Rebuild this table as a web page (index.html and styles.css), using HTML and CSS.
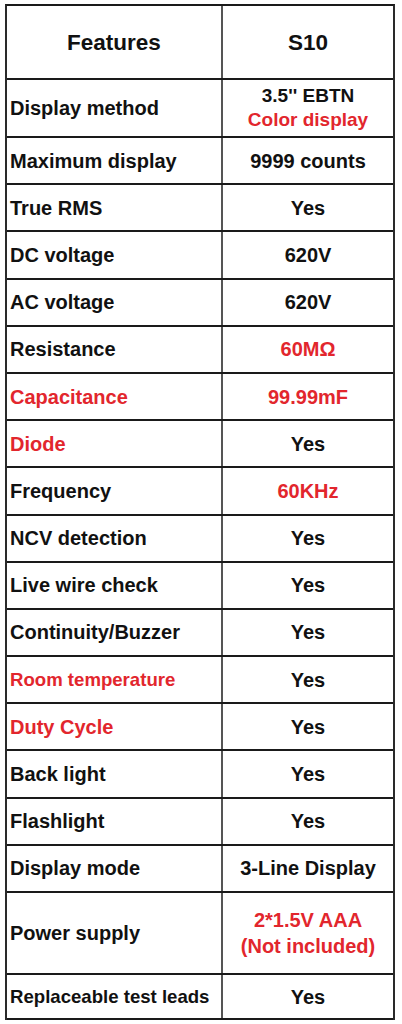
FILE: index.html
```html
<!DOCTYPE html>
<html lang="en">
<head>
<meta charset="utf-8">
<title>S10 Features</title>
<link rel="stylesheet" href="styles.css">
</head>
<body>
<div class="table">
  <div class="row head">
    <div class="cell name">Features</div>
    <div class="cell val">S10</div>
  </div>
  <div class="row first">
    <div class="cell name">Display method</div>
    <div class="cell val two"><span>3.5'' EBTN</span><span class="red">Color display</span></div>
  </div>
  <div class="row"><div class="cell name">Maximum display</div><div class="cell val">9999 counts</div></div>
  <div class="row"><div class="cell name">True RMS</div><div class="cell val">Yes</div></div>
  <div class="row"><div class="cell name">DC voltage</div><div class="cell val">620V</div></div>
  <div class="row"><div class="cell name">AC voltage</div><div class="cell val">620V</div></div>
  <div class="row"><div class="cell name">Resistance</div><div class="cell val red">60MΩ</div></div>
  <div class="row"><div class="cell name red">Capacitance</div><div class="cell val red">99.99mF</div></div>
  <div class="row"><div class="cell name red">Diode</div><div class="cell val">Yes</div></div>
  <div class="row"><div class="cell name">Frequency</div><div class="cell val red">60KHz</div></div>
  <div class="row"><div class="cell name">NCV detection</div><div class="cell val">Yes</div></div>
  <div class="row"><div class="cell name">Live wire check</div><div class="cell val">Yes</div></div>
  <div class="row"><div class="cell name">Continuity/Buzzer</div><div class="cell val">Yes</div></div>
  <div class="row"><div class="cell name red small">Room temperature</div><div class="cell val">Yes</div></div>
  <div class="row"><div class="cell name red">Duty Cycle</div><div class="cell val">Yes</div></div>
  <div class="row"><div class="cell name">Back light</div><div class="cell val">Yes</div></div>
  <div class="row"><div class="cell name">Flashlight</div><div class="cell val">Yes</div></div>
  <div class="row"><div class="cell name">Display mode</div><div class="cell val">3-Line Display</div></div>
  <div class="row power">
    <div class="cell name">Power supply</div>
    <div class="cell val two pw red"><span>2*1.5V AAA</span><span>(Not included)</span></div>
  </div>
  <div class="row last"><div class="cell name small">Replaceable test leads</div><div class="cell val">Yes</div></div>
</div>
</body>
</html>
```

FILE: styles.css
```css
html, body {
  margin: 0;
  padding: 0;
  background: #ffffff;
}

body {
  font-family: "Liberation Sans", Arial, sans-serif;
  font-weight: bold;
  color: #111111;
}

.table {
  margin: 4px 0 0 5px;
  width: 390px;
  box-sizing: border-box;
  border-top: 2px solid #1a1a1a;
  border-left: 2px solid #2a2a2a;
  border-right: 2px solid #2a2a2a;
}

.row {
  display: grid;
  grid-template-columns: 216px 170px;
  height: 47.2px;
  box-sizing: border-box;
  border-bottom: 2px solid #1a1a1a;
}

.row.head { height: 74px; }
.row.first { height: 58px; }
.row.power { height: 82px; }
.row.last { height: 45px; }

.cell {
  display: flex;
  align-items: center;
  box-sizing: border-box;
  font-size: 20px;
  line-height: 24px;
}

.cell.name {
  padding-left: 3px;
  border-right: 2px solid #555555;
}

.cell.val {
  justify-content: center;
  text-align: center;
}

.head .cell {
  justify-content: center;
  font-size: 22.5px;
  padding-left: 0;
  padding-top: 2px;
}

.cell.two {
  flex-direction: column;
  font-size: 19px;
  line-height: 24px;
}

.cell.two.pw {
  font-size: 20px;
  line-height: 26px;
}

.cell.small {
  font-size: 18.6px;
}

.red {
  color: #e2262d;
}
```
